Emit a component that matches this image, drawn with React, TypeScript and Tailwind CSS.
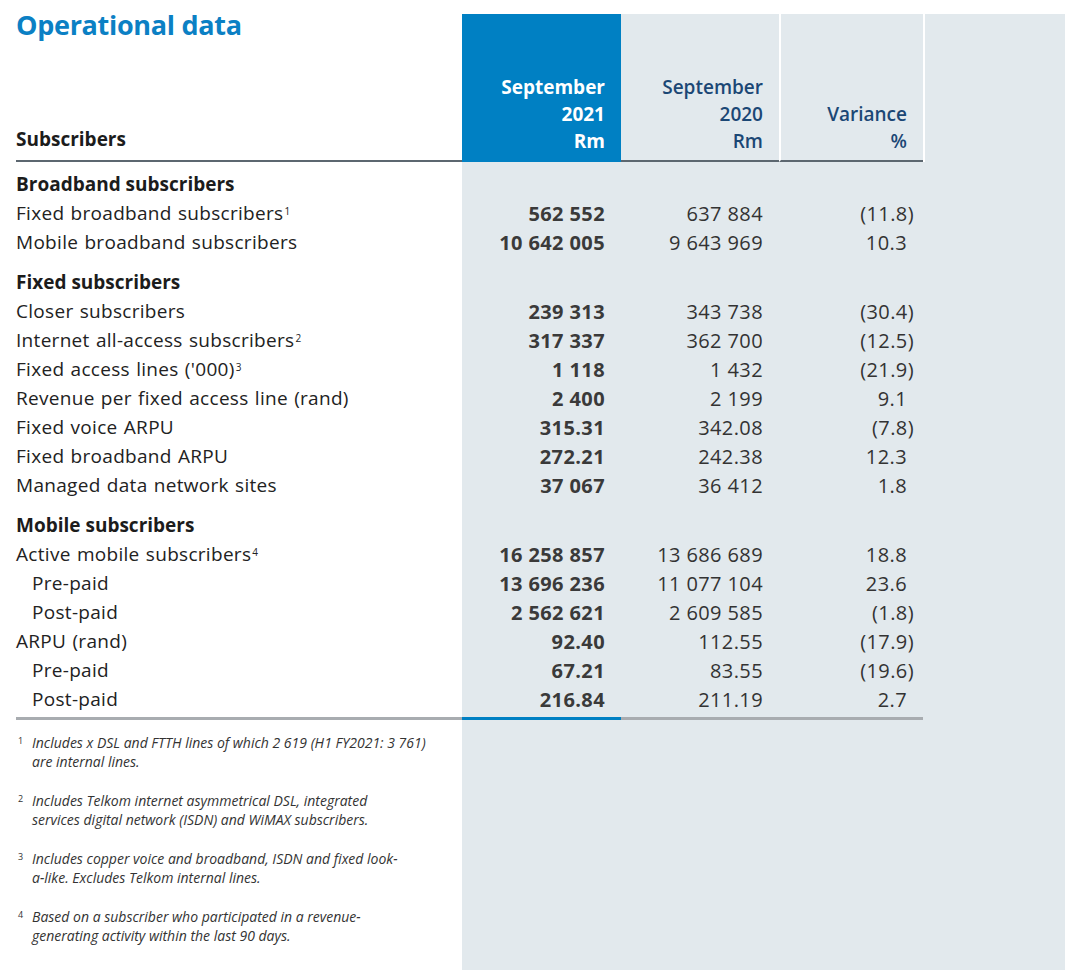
type Row = {
	label: string
	note?: string
	indent?: boolean
	current: string
	prior: string
	variance: string
}

type Section = {
	title: string
	first?: boolean
	rows: Row[]
}

const SECTIONS: Section[] = [
	{
		title: "Broadband subscribers",
		first: true,
		rows: [
			{ label: "Fixed broadband subscribers", note: "1", current: "562 552", prior: "637 884", variance: "(11.8)" },
			{ label: "Mobile broadband subscribers", current: "10 642 005", prior: "9 643 969", variance: "10.3" },
		],
	},
	{
		title: "Fixed subscribers",
		rows: [
			{ label: "Closer subscribers", current: "239 313", prior: "343 738", variance: "(30.4)" },
			{ label: "Internet all-access subscribers", note: "2", current: "317 337", prior: "362 700", variance: "(12.5)" },
			{ label: "Fixed access lines ('000)", note: "3", current: "1 118", prior: "1 432", variance: "(21.9)" },
			{ label: "Revenue per fixed access line (rand)", current: "2 400", prior: "2 199", variance: "9.1" },
			{ label: "Fixed voice ARPU", current: "315.31", prior: "342.08", variance: "(7.8)" },
			{ label: "Fixed broadband ARPU", current: "272.21", prior: "242.38", variance: "12.3" },
			{ label: "Managed data network sites", current: "37 067", prior: "36 412", variance: "1.8" },
		],
	},
	{
		title: "Mobile subscribers",
		rows: [
			{ label: "Active mobile subscribers", note: "4", current: "16 258 857", prior: "13 686 689", variance: "18.8" },
			{ label: "Pre-paid", indent: true, current: "13 696 236", prior: "11 077 104", variance: "23.6" },
			{ label: "Post-paid", indent: true, current: "2 562 621", prior: "2 609 585", variance: "(1.8)" },
			{ label: "ARPU (rand)", current: "92.40", prior: "112.55", variance: "(17.9)" },
			{ label: "Pre-paid", indent: true, current: "67.21", prior: "83.55", variance: "(19.6)" },
			{ label: "Post-paid", indent: true, current: "216.84", prior: "211.19", variance: "2.7" },
		],
	},
]

const FOOTNOTES = [
	{ n: "1", lines: ["Includes x DSL and FTTH lines of which 2 619 (H1 FY2021: 3 761)", "are internal lines."] },
	{ n: "2", lines: ["Includes Telkom internet asymmetrical DSL, integrated", "services digital network (ISDN) and WiMAX subscribers."] },
	{ n: "3", lines: ["Includes copper voice and broadband, ISDN and fixed look-", "a-like. Excludes Telkom internal lines."] },
	{ n: "4", lines: ["Based on a subscriber who participated in a revenue-", "generating activity within the last 90 days."] },
]

export default function App() {
	return (
		<div className="flex h-[970px] w-[1078px] flex-col overflow-hidden bg-white pl-[16px] font-['Open_Sans',sans-serif] text-[19px] text-[#222]">
			<TableHeader />
			{SECTIONS.map((section) => (
				<SectionBlock key={section.title} section={section} />
			))}
			<BottomRule />
			<FootnoteArea />
		</div>
	)
}

function TableHeader() {
	return (
		<div className="flex h-[162px] shrink-0">
			<div className="flex w-[446px] flex-col justify-between border-b-2 border-[#5c6770]">
				<h1 className="pt-[5px] text-[27px] font-bold leading-[40px] tracking-[-0.3px] text-[#0b80c4]">
					Operational data
				</h1>
				<div className="pb-[7px] font-bold leading-[27px] text-[#1c1c1c]">Subscribers</div>
			</div>
			<div className="mt-[14px] flex w-[159px] flex-col items-end justify-end bg-[#0080c3] pb-[7px] pr-[16px] text-right font-bold leading-[27px] text-white">
				<span>September</span>
				<span>2021</span>
				<span>Rm</span>
			</div>
			<div className="mt-[14px] flex w-[158px] flex-col items-end justify-end border-b-2 border-[#5c6770] bg-[#e2e9ed] pb-[5px] pr-[16px] text-right font-semibold leading-[27px] text-[#1b4775]">
				<span>September</span>
				<span>2020</span>
				<span>Rm</span>
			</div>
			<div className="mt-[14px] flex w-[144px] flex-col items-end justify-end border-b-2 border-l-2 border-b-[#5c6770] border-l-white bg-[#e2e9ed] pb-[5px] pr-[16px] text-right font-semibold leading-[27px] text-[#1b4775]">
				<span>Variance</span>
				<span>%</span>
			</div>
			<div className="mt-[14px] w-[142px] border-l-2 border-white bg-[#e2e9ed]" />
		</div>
	)
}

function SectionBlock({ section }: { section: Section }) {
	return (
		<>
			<div className={`flex shrink-0 ${section.first ? "h-[37px]" : "h-[40px]"}`}>
				<div className="flex w-[446px] items-end">
					<span className="font-bold leading-[29px] text-[#1c1c1c]">{section.title}</span>
				</div>
				<div className="w-[603px] bg-[#e2e9ed]" />
			</div>
			{section.rows.map((row, i) => (
				<DataRow key={i} row={row} />
			))}
		</>
	)
}

function DataRow({ row }: { row: Row }) {
	return (
		<div className="flex h-[29px] shrink-0 items-stretch leading-[29px]">
			<div className={`w-[446px] whitespace-nowrap tracking-[0.3px] [word-spacing:1px] ${row.indent ? "pl-[16px]" : ""}`}>
				{row.label}
				{row.note && <sup className="ml-[1px] text-[10px]">{row.note}</sup>}
			</div>
			<div className="w-[159px] whitespace-nowrap bg-[#e2e9ed] pr-[16px] text-right text-[20px] font-bold tracking-[0.4px] text-[#3a3a3a]">
				{row.current}
			</div>
			<div className="w-[158px] whitespace-nowrap bg-[#e2e9ed] pr-[16px] text-right text-[20px] tracking-[0.4px] text-[#333]">
				{row.prior}
			</div>
			<div className="w-[144px] whitespace-nowrap bg-[#e2e9ed] pr-[16px] text-right text-[20px] tracking-[0.4px] text-[#333]">
				<Variance value={row.variance} />
			</div>
			<div className="w-[142px] bg-[#e2e9ed]" />
		</div>
	)
}

function Variance({ value }: { value: string }) {
	if (!value.endsWith(")")) return <>{value}</>
	return (
		<>
			{value.slice(0, -1)}
			<span className="-mr-[7px]">)</span>
		</>
	)
}

function BottomRule() {
	return (
		<div className="flex h-[6px] shrink-0">
			<div className="w-[446px] border-b-[3px] border-[#a8acb0]" />
			<div className="w-[159px] border-b-[3px] border-[#0080c3] bg-[#e2e9ed]" />
			<div className="w-[302px] border-b-[3px] border-[#a8acb0] bg-[#e2e9ed]" />
			<div className="w-[142px] bg-[#e2e9ed]" />
		</div>
	)
}

function FootnoteArea() {
	return (
		<div className="flex flex-1">
			<div className="flex w-[446px] flex-col gap-[21px] pt-[14px]">
				{FOOTNOTES.map((fn) => (
					<div key={fn.n} className="flex text-[14px] italic leading-[18.5px] text-[#333]">
						<span className="w-[16px] pl-[2px] text-[9px] not-italic leading-[14px]">{fn.n}</span>
						<div className="whitespace-nowrap">
							{fn.lines.map((line) => (
								<div key={line}>{line}</div>
							))}
						</div>
					</div>
				))}
			</div>
			<div className="w-[603px] bg-[#e2e9ed]" />
		</div>
	)
}
